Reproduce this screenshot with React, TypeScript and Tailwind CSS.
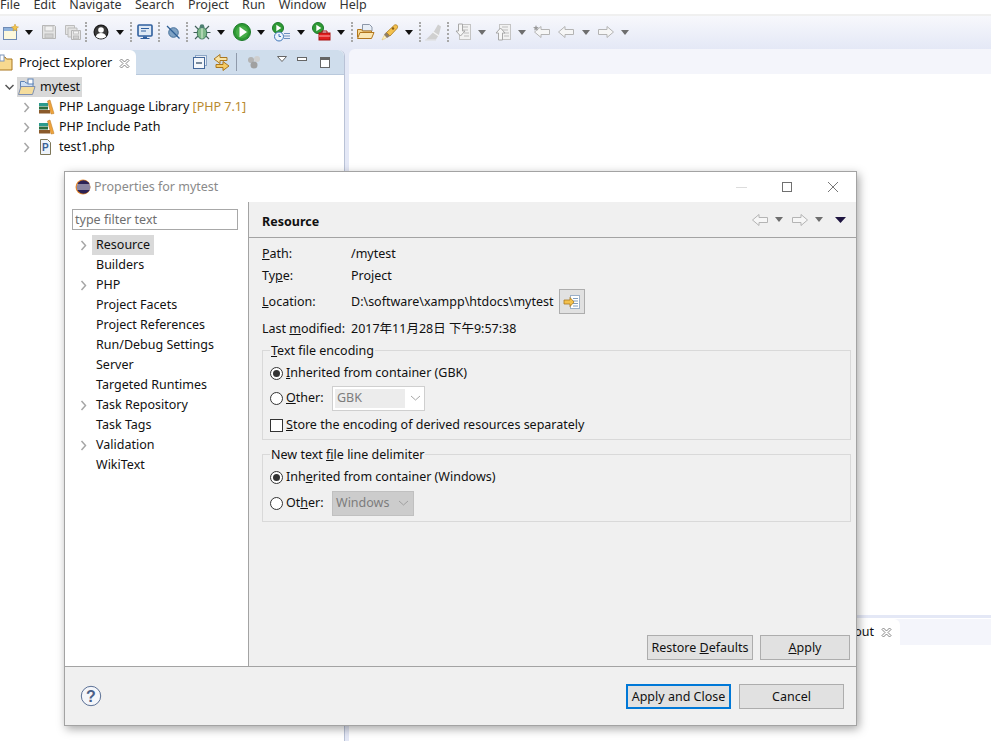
import type { ReactNode } from "react";

// small pieces shared by the toolbar and the dialog

function Slot({ className, children }: { className: string; children: ReactNode }) {
  return <span className={`flex w-2 shrink-0 items-center justify-center ${className}`}>{children}</span>;
}

function Drop({ muted }: { muted?: boolean }) {
  return (
    <svg width="8" height="5" viewBox="0 0 8 5" className="shrink-0">
      <path d="M0 0h8L4 5z" fill={muted ? "#6e6e6e" : "#111"} />
    </svg>
  );
}

function Sep() {
  return <span className="h-[20px] shrink-0 border-l-2 border-dotted border-[#a8a8a8]" />;
}

function Ico({ children, w = 18, h = 18 }: { children: ReactNode; w?: number; h?: number }) {
  return (
    <svg width={w} height={h} viewBox={`0 0 ${w} ${h}`} className="shrink-0">
      {children}
    </svg>
  );
}

function NewIcon() {
  return (
    <Ico>
      <rect x="2.500" y="4.500" width="13" height="12" fill="#fdf8dc" stroke="#6f8bb5" />
      <rect x="3" y="5" width="12" height="3" fill="#8fb2dc" />
      <path d="M14 1l1 2.500 2.500 .5-2 1.600.5 2.400-2-1.300-2 1.300.5-2.400-2-1.600 2.500-.5z" fill="#f3c64d" stroke="#c9952a" strokeWidth=".5" />
    </Ico>
  );
}

function SaveIcon() {
  return (
    <Ico>
      <path d="M2.500 2.500h12l1 1v12h-13z" fill="#e4e4e4" stroke="#b5b5b5" />
      <rect x="5" y="3" width="8" height="5" fill="#f2f2f2" stroke="#c0c0c0" />
      <rect x="5" y="11" width="8" height="4" fill="#d0d0d0" stroke="#bcbcbc" />
    </Ico>
  );
}

function SaveAllIcon() {
  return (
    <Ico w={20}>
      <path d="M2.500 2.500h9v9h-9z" fill="#e4e4e4" stroke="#bcbcbc" />
      <path d="M5 5h9v9H5z" fill="#e4e4e4" stroke="#bcbcbc" />
      <path d="M8.500 7.500h9v9h-9z" fill="#e8e8e8" stroke="#b5b5b5" />
      <rect x="10.500" y="8" width="5" height="3" fill="#f4f4f4" stroke="#c4c4c4" />
      <rect x="10.500" y="13" width="5" height="3" fill="#d0d0d0" stroke="#bcbcbc" />
    </Ico>
  );
}

function ProfileIcon() {
  return (
    <Ico>
      <circle cx="9" cy="9" r="7.500" fill="#1c1c1c" />
      <circle cx="9" cy="9" r="6.300" fill="#3a3a3a" />
      <circle cx="9" cy="7" r="2.800" fill="#fff" />
      <path d="M3.800 13.500c1-3 3-3.500 5.200-3.500s4.200 .5 5.200 3.500c-1.400 1.500-3.200 2-5.200 2s-3.800-.5-5.200-2z" fill="#fff" />
    </Ico>
  );
}

function MonitorIcon() {
  return (
    <Ico>
      <rect x="2" y="2" width="14" height="11" rx="1" fill="#dfe9f5" stroke="#2f5f9e" strokeWidth="1.600" />
      <path d="M5 5.500h8M5 8h5" stroke="#2f5f9e" />
      <path d="M7 13.500h4v1.500h2.500v1h-9v-1H7z" fill="#2f5f9e" />
    </Ico>
  );
}

function PinIcon() {
  return (
    <Ico>
      <circle cx="9.500" cy="9.500" r="4.800" fill="#7fa2c4" stroke="#47719b" />
      <path d="M3 3l12.500 12.500" stroke="#2e5f94" strokeWidth="1.200" />
    </Ico>
  );
}

function BugIcon() {
  return (
    <Ico w={20} h={20}>
      <path d="M3 4l4 4M17 4l-4 4M1.500 10.500h5M18.500 10.500h-5M3 17l4-4M17 17l-4-4" stroke="#43605a" strokeWidth="1.100" />
      <ellipse cx="10" cy="11" rx="4.800" ry="6" fill="#7fb98a" stroke="#3d7a5a" />
      <circle cx="10" cy="4.500" r="2.300" fill="#4d7f72" />
      <path d="M10 6v10.500" stroke="#dff0d8" />
    </Ico>
  );
}

function RunIcon() {
  return (
    <Ico w={20} h={20}>
      <circle cx="10" cy="10" r="8.500" fill="#2f9a35" stroke="#1c7a2a" />
      <circle cx="10" cy="10" r="6" fill="#46ad48" />
      <path d="M7.500 4.800l7.500 5.200-7.500 5.200z" fill="#fff" />
    </Ico>
  );
}

function MiniRun() {
  return (
    <g>
      <circle cx="7" cy="6" r="5.500" fill="#2f9a35" stroke="#1c7a2a" />
      <path d="M5.300 2.800l5 3.200-5 3.200z" fill="#fff" />
    </g>
  );
}

function CoverageIcon() {
  return (
    <Ico w={20} h={20}>
      <MiniRun />
      <circle cx="8" cy="14.500" r="4.500" fill="#edf3fb" stroke="#3c74b8" />
      <path d="M8 12v2.500h2" stroke="#3c74b8" fill="none" />
      <path d="M13 11.500h6M13 14h6M13 16.500h6" stroke="#6d8fbd" />
    </Ico>
  );
}

function ExternalIcon() {
  return (
    <Ico w={20} h={20}>
      <MiniRun />
      <rect x="8" y="11" width="11" height="7" fill="#e01f1f" stroke="#a81010" />
      <path d="M11 11V9h5v2" fill="none" stroke="#a81010" />
      <path d="M8 14h11" stroke="#ffb0b0" />
    </Ico>
  );
}

function FolderIcon() {
  return (
    <Ico w={20} h={20}>
      <path d="M6.500 2.500h7l2.500 2.500v4h-9.500z" fill="#e8eef6" stroke="#8c97a8" />
      <path d="M1.500 7.500h4l1 1.500h9v6h-14z" fill="#f6d995" stroke="#b2761d" />
      <path d="M1.500 16.500l2.500-6h14l-2.500 6z" fill="#fbe7b4" stroke="#b2761d" />
    </Ico>
  );
}

function PenIcon() {
  return (
    <Ico w={20} h={20}>
      <path d="M2 18c1.500-1 3-1 4.500-2.500L4.500 13C3.500 14.500 3 16 2 18z" fill="#fff3c2" stroke="#e2c270" strokeWidth=".6" />
      <path d="M4 12.500l3 3.500 3-2-3.500-4z" fill="#8f7f6a" />
      <path d="M6.500 10.500l3.500 3.500 7-7.500c1.500-2 0-4.500-2.500-3.500z" fill="#f4c14e" stroke="#a97a1f" strokeWidth=".8" />
      <circle cx="13" cy="6.500" r="1.200" fill="#8a5f14" />
    </Ico>
  );
}

function MarkerIcon() {
  return (
    <Ico w={20} h={20}>
      <path d="M2 17.500l8-8 4-7 3 2-2 8-3 5z" fill="#d0d0d0" />
      <path d="M9 10l6 4" stroke="#f2f2f2" strokeWidth="1.500" />
      <path d="M1 18h11" stroke="#dcdcdc" />
    </Ico>
  );
}

function AnnotationIcon({ up }: { up?: boolean }) {
  return (
    <Ico w={18} h={20}>
      <rect x="5.500" y="2.500" width="11" height="15" fill="#f2f2f2" stroke="#c4c4c4" />
      <path d="M8 5h6M8 8h6M10 11h5M10 14h5" stroke="#bdbdbd" />
      <path
        d={up ? "M6.500 6l4.500 5H8.500v7h-4v-7H2z" : "M4.500 2h4v7H11l-4.500 5L2 9h2.500z"}
        fill="#f6f6f6"
        stroke="#a8a8a8"
      />
    </Ico>
  );
}

function ArrowLeft({ star }: { star?: boolean }) {
  return (
    <Ico w={18} h={14}>
      <path d="M8 1.500v3h8.500v5H8v3L1.500 7z" fill="#f6f6f6" stroke="#b4b4b4" />
      {star && <path d="M3 0l.8 2 2 .2-1.500 1.300.5 2-1.800-1-1.800 1 .5-2L0 2.200 2.200 2z" fill="#9a9a9a" />}
    </Ico>
  );
}

function ArrowRight() {
  return (
    <Ico w={18} h={14}>
      <path d="M10 1.500v3H1.500v5H10v3L16.500 7z" fill="#f6f6f6" stroke="#b4b4b4" />
    </Ico>
  );
}

function CloseTab() {
  return (
    <svg width="11" height="11" viewBox="0 0 11 11" className="shrink-0">
      <path
        d="M1 2.500L2.500 1l3 3 3-3L10 2.500l-3 3 3 3L8.500 10l-3-3-3 3L1 8.500l3-3z"
        fill="#fff"
        stroke="#777"
        strokeWidth=".9"
      />
    </svg>
  );
}

function Chevron({ open }: { open?: boolean }) {
  return (
    <svg width="9" height="11" viewBox="0 0 9 11" className="shrink-0">
      <path d={open ? "M.5 3l4 4 4-4" : "M2.500 1l4 4.500-4 4.500"} fill="none" stroke={open ? "#555" : "#a6a6a6"} strokeWidth="1.500" />
    </svg>
  );
}

function LibIcon() {
  return (
    <Ico>
      <rect x="1" y="5" width="9" height="3" fill="#2b9b8e" />
      <rect x="1" y="8.500" width="9" height="3" fill="#2a6e3f" />
      <rect x="1" y="12" width="11" height="3.500" fill="#8a5a2b" />
      <path d="M9.500 3l2.500-1 4 13.500-3 .5z" fill="#eea33c" stroke="#b9741a" strokeWidth=".5" />
    </Ico>
  );
}

function PhpFileIcon() {
  return (
    <Ico>
      <path d="M2.500 1.500h7l3 3v12h-10z" fill="#eef3fa" stroke="#7d7658" />
      <text x="4" y="13" fontSize="10" fontWeight="700" fill="#3a5f96" fontFamily="Liberation Sans, sans-serif">
        P
      </text>
    </Ico>
  );
}

function ProjectIcon() {
  return (
    <Ico w={20} h={18}>
      <path d="M3.500 3.500h4l1.500 1.500h7v9h-12.500z" fill="#cfe0f4" stroke="#5e84b8" />
      <path d="M1.500 16.500l2.500-8h14l-2.500 8z" fill="#f5dd9d" stroke="#7d8fb0" />
      <rect x="11" y="1" width="5" height="5" fill="#fff" stroke="#5e84b8" />
    </Ico>
  );
}

function TreeRow({ icon, children }: { icon: ReactNode; children: ReactNode }) {
  return (
    <div className="flex h-5 items-center">
      <span className="flex w-[38px] justify-end pr-[7px]">
        <Chevron />
      </span>
      <span className="flex w-[21px] shrink-0 items-center">{icon}</span>
      <span>{children}</span>
    </div>
  );
}

function FilterRow({ children, arrow, selected }: { children: ReactNode; arrow?: boolean; selected?: boolean }) {
  return (
    <div className="flex h-5 items-center">
      <span className="flex w-[27px] shrink-0 justify-center pl-[9px]">{arrow && <Chevron />}</span>
      <span className={`flex h-5 items-center px-[4px] ${selected ? "bg-[#d9d9d9]" : ""}`}>{children}</span>
    </div>
  );
}

function Radio({ on }: { on?: boolean }) {
  return (
    <span className="flex size-[13px] shrink-0 items-center justify-center rounded-full border border-[#333] bg-white">
      {on && <span className="size-[7px] rounded-full bg-[#333]" />}
    </span>
  );
}

function InfoRow({ label, className, children }: { label: ReactNode; className: string; children: ReactNode }) {
  return (
    <div className={`flex items-center ${className}`}>
      <span className="w-[89px] shrink-0">{label}</span>
      {children}
    </div>
  );
}

function Btn({ className, children }: { className: string; children: ReactNode }) {
  return (
    <button className={`h-[25px] border bg-[#e1e1e1] pt-[2px] text-center text-[#111] ${className}`}>
      {children}
    </button>
  );
}

function Dialog() {
  return (
    <div className="absolute left-[64px] top-[171px] flex h-[555px] w-[793px] flex-col border border-[#a3a3a3] bg-[#f0f0f0] shadow-[2px_3px_9px_rgba(0,0,0,0.35)]">
      <div className="flex h-[30px] shrink-0 items-center bg-white">
        <svg width="16" height="16" viewBox="0 0 16 16" className="ml-[10px] shrink-0">
          <circle cx="8" cy="8" r="7.500" fill="#e88a2a" />
          <circle cx="8.500" cy="8" r="6.800" fill="#2c2255" />
          <path d="M2 6h13M1.700 8h13.600M2 10h13" stroke="#fff" strokeWidth=".9" />
        </svg>
        <span className="ml-[3px] text-[#8a8a8a]">Properties for mytest</span>
        <div className="ml-auto flex items-center">
          <span className="h-px w-[11px] bg-[#dcdcdc]" />
          <span className="ml-[35px] size-[10px] border border-[#707070]" />
          <svg width="12" height="12" viewBox="0 0 12 12" className="ml-[35px] mr-[17px]">
            <path d="M1 1l10 10M11 1L1 11" stroke="#777" />
          </svg>
        </div>
      </div>

      <div className="flex min-h-0 flex-1">
        <aside className="flex w-[184px] shrink-0 flex-col border-r border-[#a3a3a3] bg-white">
          <div className="ml-[7px] mt-[7px] flex h-[21px] w-[166px] items-center border border-[#a8a8a8] pl-[2px] pt-[2px] text-[#6f6f6f]">
            type filter text
          </div>
          <div className="mt-[5px] text-[#111]">
            <FilterRow arrow selected>Resource</FilterRow>
            <FilterRow>Builders</FilterRow>
            <FilterRow arrow>PHP</FilterRow>
            <FilterRow>Project Facets</FilterRow>
            <FilterRow>Project References</FilterRow>
            <FilterRow>Run/Debug Settings</FilterRow>
            <FilterRow>Server</FilterRow>
            <FilterRow>Targeted Runtimes</FilterRow>
            <FilterRow arrow>Task Repository</FilterRow>
            <FilterRow>Task Tags</FilterRow>
            <FilterRow arrow>Validation</FilterRow>
            <FilterRow>WikiText</FilterRow>
          </div>
        </aside>

        <section className="flex min-w-0 flex-1 flex-col text-[#111]">
          <div className="flex h-[36px] shrink-0 items-center border-b border-[#a3a3a3] pl-[13px] pr-[10px]">
            <span className="pt-[5px] font-bold">Resource</span>
            <div className="ml-auto flex items-center">
              <ArrowLeft />
              <span className="ml-[6px]"><Drop muted /></span>
              <span className="ml-[8px]"><ArrowRight /></span>
              <span className="ml-[6px]"><Drop muted /></span>
              <span className="ml-[12px]">
                <svg width="11" height="6" viewBox="0 0 11 6" className="block">
                  <path d="M0 0h11L5.500 6z" fill="#1e1440" />
                </svg>
              </span>
            </div>
          </div>

          <div className="flex min-h-0 flex-1 flex-col pl-[13px] pr-[5px]">
            <InfoRow className="mt-[5px] h-[22px]" label={<><u>P</u>ath:</>}>/mytest</InfoRow>
            <InfoRow className="h-[22px]" label={<>Ty<u>p</u>e:</>}>Project</InfoRow>
            <InfoRow className="mt-[2px] h-[26px]" label={<><u>L</u>ocation:</>}>
              <span className="w-[208px] shrink-0">D:\software\xampp\htdocs\mytest</span>
              <span className="-mt-px flex h-[25px] w-[26px] items-center justify-center border border-[#adadad] bg-[#e1e1e1]">
                <Ico w={18} h={16}>
                  <rect x="7.500" y="1.500" width="9" height="13" fill="#fff" stroke="#9bb0c9" />
                  <path d="M10 4.500h5M10 7h5M10 9.500h5M10 12h5" stroke="#7f9dbd" />
                  <path d="M1 6h6V3.500L11 8l-4 4.500V10H1z" fill="#f3c14d" stroke="#a97a1f" strokeWidth=".8" />
                </Ico>
              </span>
            </InfoRow>
            <InfoRow className="mt-[3px] h-[22px]" label={<>Last <u>m</u>odified:</>}>2017年11月28日 下午9:57:38</InfoRow>

            <fieldset className="mt-px h-[99px] border border-[#d9d9d9] pl-[7px]">
              <legend className="h-[18px] px-px pt-px leading-[18px]"><u>T</u>ext file encoding</legend>
              <div className="mt-[4px] flex h-5 items-center gap-[3px]">
                <Radio on />
                <span><u>I</u>nherited from container (GBK)</span>
              </div>
              <div className="mt-[2px] flex h-[26px] items-center">
                <Radio />
                <span className="ml-[3px] w-[46px]"><u>O</u>ther:</span>
                <span className="flex h-[25px] w-[93px] items-center border border-[#cfcfcf] bg-white p-[2px]">
                  <span className="flex h-[19px] w-[70px] items-center bg-[#ececec] pl-[2px] text-[#7c7c7c]">GBK</span>
                  <svg width="11" height="6" viewBox="0 0 11 6" className="ml-[5px]">
                    <path d="M1 1l4.500 4L10 1" fill="none" stroke="#a8a8a8" />
                  </svg>
                </span>
              </div>
              <div className="mt-[4px] flex h-5 items-center gap-[3px]">
                <span className="size-[13px] shrink-0 border border-[#333] bg-white" />
                <span><u>S</u>tore the encoding of derived resources separately</span>
              </div>
            </fieldset>

            <fieldset className="mt-[5px] h-[77px] border border-[#d9d9d9] pl-[7px]">
              <legend className="h-[18px] px-px pt-px leading-[18px]">New text <u>f</u>ile line delimiter</legend>
              <div className="mt-[4px] flex h-5 items-center gap-[3px]">
                <Radio on />
                <span>Inh<u>e</u>rited from container (Windows)</span>
              </div>
              <div className="mt-[3px] flex h-[26px] items-center">
                <Radio />
                <span className="ml-[3px] w-[46px]">Ot<u>h</u>er:</span>
                <span className="flex h-[25px] w-[82px] items-center border border-[#c0c0c0] bg-[#cccccc] pl-[3px] text-[#7c7c7c]">
                  Windows
                  <svg width="11" height="6" viewBox="0 0 11 6" className="ml-auto mr-[4px]">
                    <path d="M1 1l4.500 4L10 1" fill="none" stroke="#a0a0a0" />
                  </svg>
                </span>
              </div>
            </fieldset>

            <div className="mb-[6px] mt-auto flex justify-end gap-[7px] pr-px">
              <Btn className="w-[106px] border-[#adadad]">Restore <u>D</u>efaults</Btn>
              <Btn className="w-[90px] border-[#adadad]"><u>A</u>pply</Btn>
            </div>
          </div>
        </section>
      </div>

      <div className="flex h-[59px] shrink-0 items-start border-t border-[#a3a3a3] pt-[17px]">
        <svg width="22" height="22" viewBox="0 0 22 22" className="ml-[15px] mt-[1px]">
          <circle cx="11" cy="11" r="9.700" fill="#f4f6fa" stroke="#5c7196" />
          <text x="11" y="16.500" textAnchor="middle" fontSize="16" fontWeight="700" fill="#4a6088" fontFamily="Liberation Sans, sans-serif">
            ?
          </text>
        </svg>
        <div className="ml-auto flex gap-[8px] pr-[12px]">
          <Btn className="w-[105px] border-2 border-[#0078d7]">Apply and Close</Btn>
          <Btn className="w-[105px] border-[#adadad]">Cancel</Btn>
        </div>
      </div>
    </div>
  );
}

export default function App() {
  return (
    <div className="relative flex h-[741px] w-[991px] flex-col overflow-hidden bg-white font-['Noto_Sans','Noto_Sans_CJK_SC',sans-serif] text-[12.5px] text-[#111]">
      <div className="flex h-[14px] shrink-0 items-center gap-[13.400px] overflow-hidden bg-white pb-[3px] text-[#333]">
        <span>File</span>
        <span>Edit</span>
        <span>Navigate</span>
        <span>Search</span>
        <span>Project</span>
        <span>Run</span>
        <span>Window</span>
        <span>Help</span>
      </div>

      <div className="h-[2px] shrink-0 bg-[#f0f0f0]" />

      <div className="flex h-[33px] shrink-0 items-center bg-gradient-to-b from-[#f7f8fc] to-[#e4e8f6] pb-[1px]">
        <Slot className="ml-[6px]"><NewIcon /></Slot>
        <Slot className="ml-[11px]"><Drop /></Slot>
        <Slot className="ml-[12px]"><SaveIcon /></Slot>
        <Slot className="ml-[16px]"><SaveAllIcon /></Slot>
        <Slot className="ml-[5px]"><Sep /></Slot>
        <Slot className="ml-[7px]"><ProfileIcon /></Slot>
        <Slot className="ml-[11px]"><Drop /></Slot>
        <Slot className="ml-[3px]"><Sep /></Slot>
        <Slot className="ml-[6px]"><MonitorIcon /></Slot>
        <Slot className="ml-[6px]"><Sep /></Slot>
        <Slot className="ml-[6px]"><PinIcon /></Slot>
        <Slot className="ml-[6px]"><Sep /></Slot>
        <Slot className="ml-[7px]"><BugIcon /></Slot>
        <Slot className="ml-[11px]"><Drop /></Slot>
        <Slot className="ml-[13px]"><RunIcon /></Slot>
        <Slot className="ml-[11px]"><Drop /></Slot>
        <Slot className="ml-[12px]"><CoverageIcon /></Slot>
        <Slot className="ml-[12px]"><Drop /></Slot>
        <Slot className="ml-[12px]"><ExternalIcon /></Slot>
        <Slot className="ml-[12px]"><Drop /></Slot>
        <Slot className="ml-[3px]"><Sep /></Slot>
        <Slot className="ml-[6px]"><FolderIcon /></Slot>
        <Slot className="ml-[16px]"><PenIcon /></Slot>
        <Slot className="ml-[11px]"><Drop /></Slot>
        <Slot className="ml-[3px]"><Sep /></Slot>
        <Slot className="ml-[6px]"><MarkerIcon /></Slot>
        <Slot className="ml-[6px]"><Sep /></Slot>
        <Slot className="ml-[7px]"><AnnotationIcon /></Slot>
        <Slot className="ml-[11px]"><Drop muted /></Slot>
        <Slot className="ml-[13px]"><AnnotationIcon up /></Slot>
        <Slot className="ml-[11px]"><Drop muted /></Slot>
        <Slot className="ml-[12px]"><ArrowLeft star /></Slot>
        <Slot className="ml-[16px]"><ArrowLeft /></Slot>
        <Slot className="ml-[12px]"><Drop muted /></Slot>
        <Slot className="ml-[12px]"><ArrowRight /></Slot>
        <Slot className="ml-[11px]"><Drop muted /></Slot>
      </div>

      <div className="flex min-h-0 flex-1 bg-[#e4e8f6]">
        <div className="mt-px flex w-[345px] shrink-0 flex-col rounded-tr-[6px] border-r border-[#b9c2d6] bg-white">
          <div className="flex h-[25px] shrink-0 items-stretch rounded-tr-[6px] border-b border-[#b9c9dc] bg-[#cfddec]">
            <div className="-mb-px flex w-[136px] items-center rounded-tr-[6px] bg-white pt-px">
              <Ico>
                <path d="M-2 3h7l1.500 2H12v11H-2z" fill="#f7d98f" stroke="#a9761f" />
                <rect x="0" y="1" width="4" height="6" fill="#fff" stroke="#7d95ba" />
              </Ico>
              <span className="ml-px">Project Explorer</span>
              <span className="ml-[7px]"><CloseTab /></span>
            </div>
            <div className="flex items-center">
              <svg width="14" height="14" viewBox="0 0 14 14" className="ml-[57px]">
                <rect x="2.500" y=".5" width="11" height="10" fill="#e8eef6" stroke="#8ca6c6" />
                <rect x=".5" y="2.500" width="11" height="11" fill="#f4f7fb" stroke="#44689a" />
                <path d="M3 8h6" stroke="#22405f" strokeWidth="1.200" />
              </svg>
              <svg width="17" height="17" viewBox="0 0 17 17" className="ml-[6px]">
                <path d="M7 .5v3h7v3H7v3L1 5z" fill="#f9e4a6" stroke="#a9761f" />
                <path d="M10 7.500v3H3v3h7v3l6-4.500z" fill="#f5cb66" stroke="#a9761f" />
              </svg>
              <span className="ml-[6px] h-[18px] border-l border-[#8f9aab]" />
              <svg width="14" height="14" viewBox="0 0 14 14" className="ml-[10px]">
                <circle cx="4" cy="5" r="3" fill="#b3b3b3" />
                <circle cx="10" cy="4" r="3" fill="#cfcfcf" />
                <circle cx="7" cy="10" r="3.500" fill="#a0a0a0" />
              </svg>
              <svg width="10" height="6" viewBox="0 0 10 6" className="ml-[16px] -mt-[6px]">
                <path d="M.5 .5h9L5 5.500z" fill="#fff" stroke="#666" />
              </svg>
              <span className="ml-[10px] -mt-[6px] h-[4px] w-[10px] border border-[#666] bg-white" />
              <span className="ml-[13px] flex h-[11px] w-[10px] flex-col border border-[#666] bg-white">
                <span className="h-[2px] bg-[#666]" />
              </span>
            </div>
          </div>

          <div className="mt-[2px] flex h-5 items-center">
            <span className="flex w-[17px] justify-center pl-[1px]"><Chevron open /></span>
            <span className="flex h-5 items-center bg-[#d9d9d9] pr-[2px]">
              <ProjectIcon />
              <span className="ml-[3px]">mytest</span>
            </span>
          </div>
          <TreeRow icon={<LibIcon />}>
            PHP Language Library <span className="text-[#b8892f]">[PHP 7.1]</span>
          </TreeRow>
          <TreeRow icon={<LibIcon />}>PHP Include Path</TreeRow>
          <TreeRow icon={<PhpFileIcon />}>test1.php</TreeRow>
        </div>

        <div className="ml-[4px] flex min-w-0 flex-1 flex-col">
          <div className="flex h-[25px] shrink-0 rounded-tl-[6px] bg-[#f4f5fb]" />
          <div className="min-h-0 flex-1 bg-white" />
          <div className="h-[3px] shrink-0 bg-[#e4e8f6]" />
          <div className="h-px shrink-0 bg-white" />
          <div className="flex h-[26px] shrink-0 bg-[#f4f5fb]">
            <div className="flex w-[551px] items-center justify-end rounded-tr-[6px] bg-white pr-[8px]">
              <span>out</span>
              <span className="ml-[7px]"><CloseTab /></span>
            </div>
          </div>
          <div className="h-[96px] shrink-0 bg-white" />
        </div>
      </div>

      <Dialog />
    </div>
  );
}
